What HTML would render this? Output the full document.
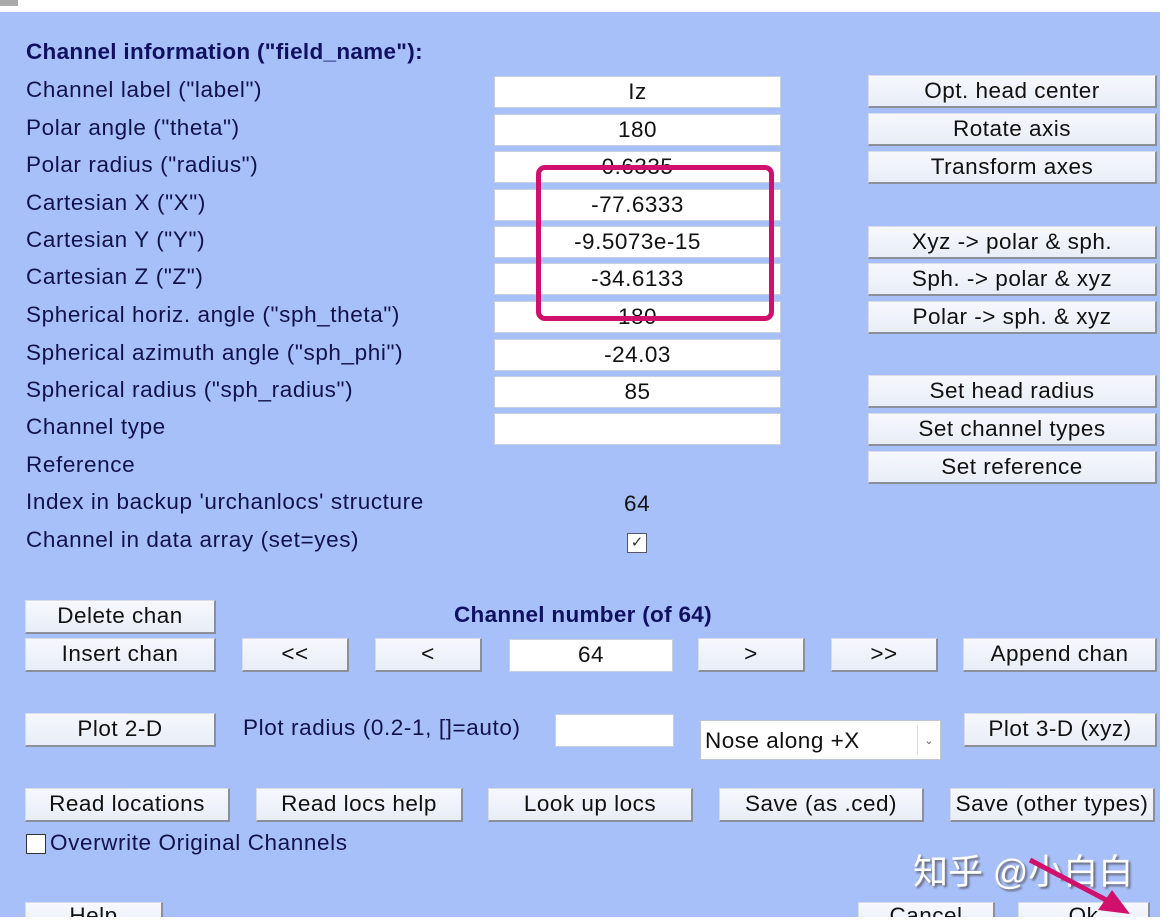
<!DOCTYPE html>
<html><head><meta charset="utf-8"><style>
*{margin:0;padding:0;box-sizing:border-box}
html,body{width:1168px;height:924px;overflow:hidden}
body{background:#fff;position:relative;font-family:"Liberation Sans",Arial,sans-serif;color:#12124a}
#bg{position:absolute;left:0;top:12px;width:1160px;height:905px;background:#a8c0f9}
.t{position:absolute;font-size:22.5px;letter-spacing:0.6px;white-space:nowrap;line-height:24px}
.b{font-weight:bold;color:#101060;letter-spacing:0.3px}
.in{position:absolute;background:#fff;border:1px solid #c8d0e0;font-size:22.5px;letter-spacing:0.5px;text-align:center;color:#111;line-height:30px}
.btn{position:absolute;background:linear-gradient(#f6f8fd,#e8edf7);border:1px solid #d8dce6;border-right:2px solid #8a8f9a;border-bottom:2px solid #8a8f9a;font-size:22.5px;letter-spacing:0.5px;text-align:center;color:#111;line-height:30px;white-space:nowrap;overflow:hidden}
</style></head><body>
<div id="bg"></div>
<div style="position:absolute;left:0;top:0;width:18px;height:6px;background:#aaa"></div>
<div class="t b" style="left:26px;top:40px">Channel information ("field_name"):</div>
<div class="t" style="left:26px;top:78px">Channel label ("label")</div>
<div class="t" style="left:26px;top:116px">Polar angle ("theta")</div>
<div class="t" style="left:26px;top:153px">Polar radius ("radius")</div>
<div class="t" style="left:26px;top:191px">Cartesian X ("X")</div>
<div class="t" style="left:26px;top:228px">Cartesian Y ("Y")</div>
<div class="t" style="left:26px;top:265px">Cartesian Z ("Z")</div>
<div class="t" style="left:26px;top:303px">Spherical horiz. angle ("sph_theta")</div>
<div class="t" style="left:26px;top:341px">Spherical azimuth angle ("sph_phi")</div>
<div class="t" style="left:26px;top:378px">Spherical radius ("sph_radius")</div>
<div class="t" style="left:26px;top:415px">Channel type</div>
<div class="t" style="left:26px;top:453px">Reference</div>
<div class="t" style="left:26px;top:490px">Index in backup 'urchanlocs' structure</div>
<div class="t" style="left:26px;top:528px">Channel in data array (set=yes)</div>

<div class="in" style="left:494px;top:76px;width:287px;height:32px">Iz</div>
<div class="in" style="left:494px;top:114px;width:287px;height:32px">180</div>
<div class="in" style="left:494px;top:151px;width:287px;height:32px">0.6335</div>
<div class="in" style="left:494px;top:189px;width:287px;height:32px">-77.6333</div>
<div class="in" style="left:494px;top:226px;width:287px;height:32px">-9.5073e-15</div>
<div class="in" style="left:494px;top:263px;width:287px;height:32px">-34.6133</div>
<div class="in" style="left:494px;top:301px;width:287px;height:32px">180</div>
<div class="in" style="left:494px;top:339px;width:287px;height:32px">-24.03</div>
<div class="in" style="left:494px;top:376px;width:287px;height:32px">85</div>
<div class="in" style="left:494px;top:413px;width:287px;height:32px"></div>
<div class="t" style="left:624px;top:492px;color:#111">64</div>
<div style="position:absolute;left:627px;top:533px;width:20px;height:20px;background:#fff;border:1px solid #556;font-size:15px;line-height:18px;text-align:center;color:#333">✓</div>

<div style="position:absolute;left:536px;top:165px;width:238px;height:156px;border:5px solid #d0106c;border-radius:9px"></div>

<div class="btn" style="left:868px;top:75px;width:289px;height:33px">Opt. head center</div>
<div class="btn" style="left:868px;top:113px;width:289px;height:33px">Rotate axis</div>
<div class="btn" style="left:868px;top:151px;width:289px;height:33px">Transform axes</div>
<div class="btn" style="left:868px;top:226px;width:289px;height:33px">Xyz -&gt; polar &amp; sph.</div>
<div class="btn" style="left:868px;top:263px;width:289px;height:33px">Sph. -&gt; polar &amp; xyz</div>
<div class="btn" style="left:868px;top:301px;width:289px;height:33px">Polar -&gt; sph. &amp; xyz</div>
<div class="btn" style="left:868px;top:375px;width:289px;height:33px">Set head radius</div>
<div class="btn" style="left:868px;top:413px;width:289px;height:33px">Set channel types</div>
<div class="btn" style="left:868px;top:451px;width:289px;height:33px">Set reference</div>

<div class="btn" style="left:25px;top:600px;width:191px;height:34px">Delete chan</div>
<div class="t b" style="left:454px;top:603px">Channel number (of 64)</div>
<div class="btn" style="left:25px;top:638px;width:191px;height:34px">Insert chan</div>
<div class="btn" style="left:242px;top:638px;width:107px;height:34px">&lt;&lt;</div>
<div class="btn" style="left:375px;top:638px;width:107px;height:34px">&lt;</div>
<div class="in" style="left:509px;top:639px;width:164px;height:33px">64</div>
<div class="btn" style="left:698px;top:638px;width:107px;height:34px">&gt;</div>
<div class="btn" style="left:831px;top:638px;width:107px;height:34px">&gt;&gt;</div>
<div class="btn" style="left:963px;top:638px;width:194px;height:34px">Append chan</div>

<div class="btn" style="left:25px;top:713px;width:191px;height:34px">Plot 2-D</div>
<div class="t" style="left:243px;top:716px">Plot radius (0.2-1, []=auto)</div>
<div class="in" style="left:555px;top:714px;width:119px;height:33px"></div>
<div style="position:absolute;left:700px;top:720px;width:241px;height:40px;background:#fff;border:1px solid #c0c4cc;font-size:22.5px;letter-spacing:0.5px;line-height:40px;padding-left:4px;color:#111">Nose along +X<span style="position:absolute;right:6px;top:0;font-size:11px;color:#666">⌄</span><span style="position:absolute;right:22px;top:4px;height:30px;border-left:1px solid #ddd"></span></div>
<div class="btn" style="left:964px;top:713px;width:193px;height:34px">Plot 3-D (xyz)</div>

<div class="btn" style="left:25px;top:788px;width:205px;height:34px">Read locations</div>
<div class="btn" style="left:256px;top:788px;width:207px;height:34px">Read locs help</div>
<div class="btn" style="left:488px;top:788px;width:205px;height:34px">Look up locs</div>
<div class="btn" style="left:719px;top:788px;width:205px;height:34px">Save (as .ced)</div>
<div class="btn" style="left:950px;top:788px;width:205px;height:34px">Save (other types)</div>
<div style="position:absolute;left:26px;top:834px;width:20px;height:20px;background:#fff;border:1px solid #333"></div>
<div class="t" style="left:50px;top:831px">Overwrite Original Channels</div>

<div class="btn" style="left:25px;top:902px;width:138px;height:34px;line-height:26px">Help</div>
<div class="btn" style="left:858px;top:902px;width:137px;height:34px;line-height:26px">Cancel</div>
<div class="btn" style="left:1018px;top:902px;width:132px;height:34px;line-height:26px">Ok</div>
<div style="position:absolute;left:0;top:917px;width:1168px;height:7px;background:#fff"></div>

<div class="t" style="left:913px;top:853px;font-family:'Liberation Sans','Noto Sans CJK SC',sans-serif;font-size:35px;letter-spacing:0;line-height:40px;color:#fff;text-shadow:2px 2px 2px #667">知乎 @小白白</div>
<svg style="position:absolute;left:0;top:0" width="1168" height="924"><line x1="1030" y1="860" x2="1112" y2="903" stroke="#d0106c" stroke-width="5"/><polygon points="1130,914 1098,910 1112,890" fill="#d0106c"/></svg>
</body></html>
